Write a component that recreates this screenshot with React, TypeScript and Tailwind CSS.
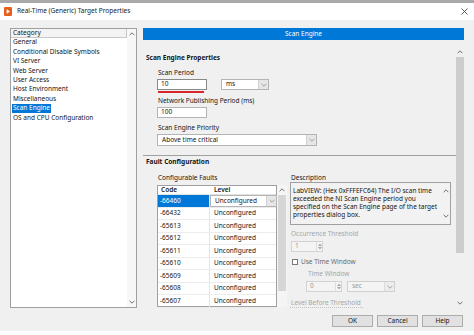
import React from "react";

type Dir = "up" | "down";

function Chevron({ dir = "down", className = "" }: { dir?: Dir; className?: string }) {
	return (
		<svg width="6" height="4" viewBox="0 0 6 4" className={className}>
			<polyline
				points={dir === "down" ? "0.6,0.8 3,3.2 5.4,0.8" : "0.6,3.2 3,0.8 5.4,3.2"}
				fill="none"
				stroke="currentColor"
				strokeWidth="0.9"
			/>
		</svg>
	);
}

function Select({ value, className = "", muted = false }: { value: string; className?: string; muted?: boolean }) {
	return (
		<div className={`flex border ${muted ? "border-[#cfcfcf] bg-[#f4f4f4] text-[#9a9a9a]" : "border-[#b4b4b4] bg-white"} ${className}`}>
			<div className="flex-1 flex items-center pl-[4px]">{value}</div>
			<div className={`w-[10px] flex items-center justify-center border-l ${muted ? "border-[#dcdcdc] bg-[#ececec]" : "border-[#cfcfcf] bg-[#e6e6e6]"} text-[#9a9a9a]`}>
				<Chevron />
			</div>
		</div>
	);
}

function Spin({ value, className = "" }: { value: string; className?: string }) {
	return (
		<div className={`flex border border-[#d2d2d2] bg-[#f4f4f4] text-[#9a9a9a] ${className}`}>
			<div className="flex-1 flex items-center pl-[3px]">{value}</div>
			<div className="w-[6px] flex flex-col items-center justify-center gap-[1px] border-l border-[#dedede]">
				<svg width="4" height="3" viewBox="0 0 4 3"><polygon points="0,3 2,0.5 4,3" fill="#a8a8a8" /></svg>
				<svg width="4" height="3" viewBox="0 0 4 3"><polygon points="0,0 2,2.5 4,0" fill="#a8a8a8" /></svg>
			</div>
		</div>
	);
}

const categories = [
	"General",
	"Conditional Disable Symbols",
	"VI Server",
	"Web Server",
	"User Access",
	"Host Environment",
	"Miscellaneous",
	"Scan Engine",
	"OS and CPU Configuration",
];

const faults = ["-66460", "-66432", "-65613", "-65612", "-65611", "-65610", "-65609", "-65608", "-65607"];

function CategoryList() {
	return (
		<div className="w-[127px] h-full bg-white border border-[#a0a0a0] flex">
			<div className="flex-1">
				<div className="h-[9px] flex items-center pl-[2px] bg-[#f3f3f3] border-b border-[#c8c8c8] border-r">Category</div>
				{categories.map((c) => (
					<div key={c} className="h-[9.4px] flex items-center pl-[1px]">
						<span className={c === "Scan Engine" ? "bg-[#0078d7] text-white px-[1px] h-[9px] flex items-center" : "px-[1px]"}>{c}</span>
					</div>
				))}
			</div>
			<div className="w-[9px] bg-[#f7f7f7] flex flex-col items-center justify-between pt-[3px] pb-[3px] text-[#606060]">
				<Chevron dir="up" />
				<Chevron dir="down" />
			</div>
		</div>
	);
}

function FaultTable() {
	return (
		<div className="flex h-[122px]">
			<div className="w-[120px] border border-[#a0a0a0] bg-white">
				<div className="h-[9px] flex font-semibold border-b border-[#e2e2e2]">
					<div className="w-[52px] pl-[3px] flex items-center">Code</div>
					<div className="flex-1 pl-[4px] flex items-center">Level</div>
				</div>
				{faults.map((f, i) => (
					<div key={f} className="h-[12.5px] flex border-b border-[#ececec]">
						<div className={`w-[52px] pl-[2px] flex items-center border-r border-[#e4e4e4] ${i === 0 ? "bg-[#0078d7] text-white" : ""}`}>{f}</div>
						{i === 0 ? (
							<Select value="Unconfigured" className="flex-1 -mr-[1px]" />
						) : (
							<div className="flex-1 pl-[4px] flex items-center">Unconfigured</div>
						)}
					</div>
				))}
			</div>
			<div className="w-[10px] flex flex-col bg-[#f5f5f5]">
				<div className="h-[10px] flex items-center justify-center text-[#606060]">
					<Chevron dir="up" />
				</div>
				<div className="h-[96px] mx-[1px] bg-[#d6d6d6]" />
			</div>
		</div>
	);
}

function ScanPanel() {
	return (
		<div className="w-[321px] h-full flex flex-col">
			<div className="h-[12px] bg-[#0078d7] text-white flex items-center justify-center">Scan Engine</div>
			<div className="flex-1 flex min-h-0">
				<div className="flex-1 overflow-hidden pt-[13px]">
					<div className="h-[10px] flex items-center pl-[3px] font-bold">Scan Engine Properties</div>
					<div className="pl-[14px]">
						<div className="h-[10px] mt-[5px] flex items-center pl-[1px]">Scan Period</div>
						<div className="flex mt-[1px] h-[11px]">
							<div className="w-[50px] border border-[#8a8a8a] bg-white flex items-center pl-[3px]">10</div>
							<Select value="ms" className="w-[48px] ml-[14px]" />
						</div>
						<div className="w-[46px] h-[2px] ml-[1px] mt-[1px] bg-[#d9262c]" />
						<div className="h-[10px] mt-[3px] flex items-center pl-[1px]">Network Publishing Period (ms)</div>
						<div className="w-[50px] h-[11px] mt-[1px] border border-[#b4b4b4] bg-white flex items-center pl-[3px]">100</div>
						<div className="h-[10px] mt-[5px] flex items-center pl-[1px]">Scan Engine Priority</div>
						<Select value="Above time critical" className="w-[160px] h-[12px] mt-[1px]" />
					</div>
					<div className="h-[1px] mt-[9px] bg-[#a0a0a0]" />
					<div className="h-[10px] mt-[1px] flex items-center pl-[3px] font-bold">Fault Configuration</div>
					<div className="flex pl-[14px] gap-[3px]">
						<div className="w-[130px]">
							<div className="h-[10px] mt-[6px] flex items-center pl-[1px]">Configurable Faults</div>
							<div className="mt-[2px]">
								<FaultTable />
							</div>
						</div>
						<div className="w-[162px]">
							<div className="h-[8px] mt-[7px] flex items-center pl-[1px]">Description</div>
							<div className="h-[43px] w-[161px] border border-[#a0a0a0] bg-[#f2f2f2] flex">
								<div className="flex-1 pl-[2px] pt-[4px] leading-[8px]">
									<div>LabVIEW: (Hex 0xFFFEFC64) The I/O scan time</div>
									<div>exceeded the NI Scan Engine period you</div>
									<div>specified on the Scan Engine page of the target</div>
									<div>properties dialog box.</div>
								</div>
								<div className="w-[9px] flex flex-col items-center justify-between py-[6px] text-[#606060]">
									<Chevron dir="up" />
									<Chevron dir="down" />
								</div>
							</div>
							<div className="h-[8px] mt-[5px] flex items-center pl-[1px] text-[#a6a6a6]">Occurrence Threshold</div>
							<Spin value="1" className="w-[32px] h-[11px] mt-[3px] ml-[1px]" />
							<div className="h-[8px] mt-[6px] flex items-center gap-[3px] pl-[2px] text-[#6a6a6a]">
								<div className="w-[6px] h-[6px] border border-[#7a7a7a] bg-white" />
								<span>Use Time Window</span>
							</div>
							<div className="h-[8px] mt-[4px] flex items-center pl-[18px] text-[#a6a6a6]">Time Window</div>
							<div className="flex mt-[3px] pl-[16px] gap-[5px] h-[11px]">
								<Spin value="0" className="w-[36px]" />
								<Select value="sec" muted className="w-[48px]" />
							</div>
							<div className="mt-[7px] h-[9px] inline-flex items-center pl-[1px] pr-[2px] text-[#a6a6a6] border-b border-dotted border-[#c4c4c4]">
								Level Before Threshold
							</div>
						</div>
					</div>
				</div>
				<div className="w-[8px] flex flex-col items-center pt-[8px] text-[#606060]">
					<div className="h-[8px] flex items-center">
						<Chevron dir="up" />
					</div>
					<div className="w-[8px] h-[196px] mt-[1px] bg-[#cdcdcd]" />
					<div className="h-[8px] mt-[46px] flex items-center">
						<Chevron dir="down" />
					</div>
				</div>
			</div>
		</div>
	);
}

export default function App() {
	return (
		<div className="w-[474px] h-[335px] bg-white flex flex-col overflow-hidden font-['Noto_Sans',sans-serif] text-[6.5px] leading-none text-[#151515]">
			<div className="h-[3px] bg-[#a9a9a9]" />
			<div className="h-[17px] bg-white flex items-center pl-[4px] pr-[6px]">
				<svg width="8" height="9" viewBox="0 0 8 9">
					<rect x="0" y="0" width="8" height="9" rx="1" fill="#e4601c" />
					<polygon points="2.6,2.3 6,4.5 2.6,6.7" fill="white" />
				</svg>
				<span className="ml-[5px] text-[6.5px] text-[#202020]">Real-Time (Generic) Target Properties</span>
				<svg width="7" height="7" viewBox="0 0 7 7" className="ml-auto">
					<path d="M0.5 0.5 L6.5 6.5 M6.5 0.5 L0.5 6.5" stroke="#333" strokeWidth="0.8" />
				</svg>
			</div>
			<div className="h-[311px] bg-[#f0f0f0] flex flex-col pl-[10px] pr-[10px] pt-[8px]">
				<div className="flex gap-[6px] h-[280px]">
					<CategoryList />
					<ScanPanel />
				</div>
				<div className="flex justify-end gap-[4px] mt-[7px] pr-[1px]">
					{["OK", "Cancel", "Help"].map((b) => (
						<button key={b} type="button" className="w-[41px] h-[12px] bg-[#e1e1e1] border border-[#adadad] flex items-center justify-center">
							{b}
						</button>
					))}
				</div>
			</div>
		</div>
	);
}
